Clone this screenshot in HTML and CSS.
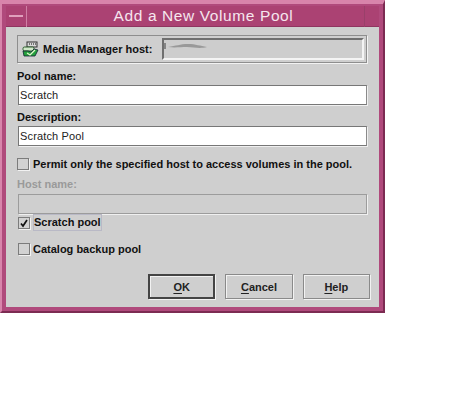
FILE: index.html
```html
<!DOCTYPE html>
<html>
<head>
<meta charset="utf-8">
<title>Add a New Volume Pool</title>
<link rel="stylesheet" href="styles.css">
</head>
<body>
<div class="window">
  <div class="titlebar">
    <div class="menu-btn"><span class="dash"></span></div>
    <div class="title">Add a New Volume Pool</div>
    <div class="corner"></div>
  </div>
  <div class="client">
    <div class="host-panel">
      <svg class="host-icon" width="17" height="17" viewBox="0 0 17 17">
        <rect x="5" y="1" width="10" height="5" fill="#d8d8d8" stroke="#333" stroke-width="1"/>
        <path d="M7 3h1M9 3h1M11 3h1M13 3h1" stroke="#111" stroke-width="1.2"/>
        <rect x="1" y="6" width="11" height="4" rx="1.5" fill="#cfe8c8" stroke="#2a5a2a"/>
        <path d="M1 10l1 5h11l3-6-4-1-3 3-3-1z" fill="#23a03c" stroke="#123" stroke-width=".8"/>
        <path d="M5 12l3 2 5-5" stroke="#e8f5d0" stroke-width="1.2" fill="none"/>
      </svg>
      <span class="host-label">Media Manager host:</span>
      <div class="host-field">
        <svg class="smudge" width="48" height="10" viewBox="0 0 48 10">
          <path d="M1 2v6" stroke="#555" stroke-width="1.2"/>
          <path d="M4 6c8-1 12-3 20-3 8 0 12 2 19 3-8 2-13 0-20 0-7 0-12 1-19 0z" fill="#999"/>
        </svg>
      </div>
    </div>
    <label class="field-label pool-label">Pool name:</label>
    <div class="input">Scratch</div>
    <label class="field-label desc-label">Description:</label>
    <div class="input">Scratch Pool</div>
    <div class="check-row permit"><span class="box"></span><span class="check-text">Permit only the specified host to access volumes in the pool.</span></div>
    <label class="field-label disabled host-name-label">Host name:</label>
    <div class="input input-disabled"></div>
    <div class="check-row scratch">
      <span class="box">
        <svg width="12" height="12" viewBox="0 0 12 12"><path d="M3 6.5l2 2.5 4-6" fill="none" stroke="#111" stroke-width="1.7"/></svg>
      </span>
      <span class="check-text focused">Scratch pool</span>
    </div>
    <div class="check-row catalog"><span class="box"></span><span class="check-text">Catalog backup pool</span></div>
    <div class="buttons">
      <div class="btn btn-default"><span><u>O</u>K</span></div>
      <div class="btn"><span><u>C</u>ancel</span></div>
      <div class="btn"><span><u>H</u>elp</span></div>
    </div>
  </div>
</div>
</body>
</html>
```
FILE: styles.css
```css
* { box-sizing: border-box; }
html, body { margin: 0; padding: 0; background: #fff; }
body { width: 474px; height: 414px; overflow: hidden; font-family: "Liberation Sans", Arial, sans-serif; }

.window {
  width: 385px;
  height: 313px;
  background: #b04a7c;
  border-top: 4px solid #d884ab;
  border-left: 2px solid #d884ab;
  border-right: 2px solid #7c2b52;
  border-bottom: 2px solid #7c2b52;
  padding: 2px 4px 4px 4px;
  display: flex;
  flex-direction: column;
}
.titlebar {
  height: 21px;
  flex: none;
  display: flex;
  align-items: center;
  background: #ab4273;
  border-bottom: 1px solid #8f3560;
}
.menu-btn {
  width: 21px;
  height: 21px;
  flex: none;
  display: flex;
  align-items: center;
  justify-content: center;
  border-right: 1px solid #cf7fa5;
}
.dash { display: block; width: 14px; height: 2px; background: #e0a0bd; }
.title {
  flex: 1;
  text-align: center;
  color: #f6e6ee;
  font-size: 15.5px;
  letter-spacing: 0.6px;
  padding-left: 16px;
  padding-bottom: 1px;
}
.corner { width: 15px; height: 21px; flex: none; border-left: 1px solid #99406a; }

.client {
  flex: 1;
  background: #cfcfcf;
  padding: 8px 9px 0 11px;
  display: flex;
  flex-direction: column;
  color: #111;
}
.host-panel {
  width: 350px;
  height: 28px;
  flex: none;
  border: 1px solid #8e8e8e;
  box-shadow: 1px 1px 0 #f2f2f2;
  display: flex;
  align-items: center;
  padding-left: 4px;
  padding-right: 2px;
}
.host-icon { flex: none; }
.host-label { font-size: 11px; font-weight: bold; margin-left: 4px; width: 119px; flex: none; white-space: nowrap; }
.host-field {
  flex: 1;
  height: 22px;
  background: #cdcdcd;
  border-top: 2px solid #6f6f6f;
  border-left: 2px solid #6f6f6f;
  border-right: 2px solid #f4f4f4;
  border-bottom: 2px solid #f4f4f4;
  display: flex;
  align-items: flex-start;
}
.smudge { margin-top: 1px; }

.field-label { display: block; font-size: 11px; font-weight: bold; line-height: 14px; flex: none; }
.pool-label { margin-top: 6px; }
.desc-label { margin-top: 5px; }
.host-name-label { margin-top: 6px; }
.disabled { color: #9a9a9a; }

.input {
  width: 349px;
  height: 20px;
  flex: none;
  margin-top: 2px;
  margin-left: 1px;
  background: #fff;
  border: 1px solid #777;
  border-right-color: #8a8a8a;
  box-shadow: 1px 1px 0 #f0f0f0;
  font-size: 11px;
  line-height: 18px;
  padding-left: 1px;
  color: #222;
  letter-spacing: 0.15px;
}
.input-disabled { background: #cfcfcf; border-color: #9c9c9c; margin-top: 3px; }

.check-row { display: flex; align-items: center; flex: none; }
.box {
  width: 12px;
  height: 12px;
  flex: none;
  background: #d2d2d2;
  border: 1px solid #7c7c7c;
  box-shadow: 1px 1px 0 #f2f2f2;
  display: block;
  line-height: 0;
}
.box svg { display: block; margin: -1px; }
.check-text { font-size: 11px; font-weight: bold; margin-left: 4px; line-height: 14px; white-space: nowrap; }
.permit { margin-top: 11px; }
.scratch { margin-left: 1px; }
.focused { border: 1px solid #b9b9c6; padding-bottom: 1px; margin-left: 3px; width: 69px; height: 17px; }
.catalog { margin-top: 11px; margin-left: 1px; }
.catalog .check-text { margin-left: 3px; }

.buttons { display: flex; gap: 10px; margin-top: 18px; margin-left: 131px; flex: none; }
.btn {
  width: 68px;
  height: 25px;
  border: 1px solid #8a8a8a;
  box-shadow: inset 1px 1px 0 #f2f2f2, 1px 1px 0 #f2f2f2;
  display: flex;
  align-items: center;
  justify-content: center;
  font-size: 11px;
  font-weight: bold;
  color: #222;
}
.btn u { text-underline-offset: 2px; }
.btn-default { border: 2px solid #444; }
```
